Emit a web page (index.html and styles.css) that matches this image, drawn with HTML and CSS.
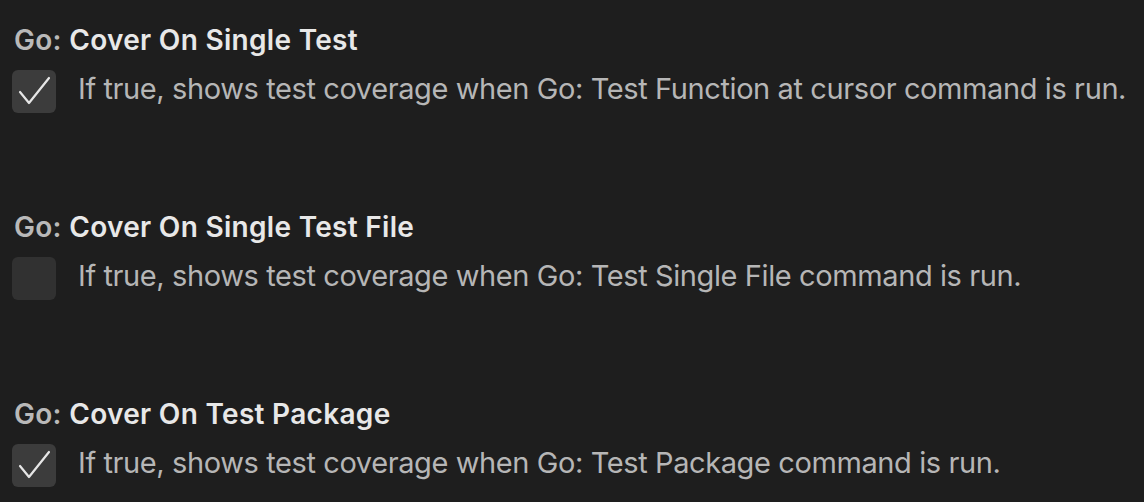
FILE: index.html
```html
<!DOCTYPE html>
<html lang="en">
<head>
<meta charset="utf-8">
<title>Settings</title>
<link rel="stylesheet" href="styles.css">
</head>
<body>
<div class="settings">
  <div class="setting">
    <div class="title"><span class="category">Go: </span><span class="label">Cover On Single Test</span></div>
    <div class="row">
      <div class="checkbox checked">
        <svg viewBox="0 0 44 43" width="44" height="43"><polyline points="8,22 17,33 37,8" fill="none" stroke="#e6e6e6" stroke-width="2.2" stroke-linecap="round" stroke-linejoin="round"/></svg>
      </div>
      <div class="desc">If true, shows test coverage when Go: Test Function at cursor command is run.</div>
    </div>
  </div>
  <div class="setting">
    <div class="title"><span class="category">Go: </span><span class="label">Cover On Single Test File</span></div>
    <div class="row">
      <div class="checkbox"></div>
      <div class="desc">If true, shows test coverage when Go: Test Single File command is run.</div>
    </div>
  </div>
  <div class="setting">
    <div class="title"><span class="category">Go: </span><span class="label">Cover On Test Package</span></div>
    <div class="row">
      <div class="checkbox checked">
        <svg viewBox="0 0 44 43" width="44" height="43"><polyline points="8,22 17,33 37,8" fill="none" stroke="#e6e6e6" stroke-width="2.2" stroke-linecap="round" stroke-linejoin="round"/></svg>
      </div>
      <div class="desc">If true, shows test coverage when Go: Test Package command is run.</div>
    </div>
  </div>
</div>
</body>
</html>
```
FILE: styles.css
```css
html, body {
  margin: 0;
  padding: 0;
  background: #1e1e1e;
  height: 100%;
}
body {
  font-family: Inter, "Liberation Sans", sans-serif;
  overflow: hidden;
}
.settings {
  display: flex;
  flex-direction: column;
  gap: 96px;
  padding: 22px 0 0 14px;
}
.title {
  font-size: 28px;
  line-height: 36px;
  font-weight: 600;
  letter-spacing: 0.3px;
  white-space: nowrap;
}
.category {
  color: #b9b9b9;
}
.label {
  color: #e8e8e8;
}
.row {
  display: flex;
  align-items: flex-start;
  margin-top: 12px;
}
.checkbox {
  width: 44px;
  height: 43px;
  margin-left: -2px;
  border-radius: 6px;
  background: #313131;
  flex: none;
}
.checkbox.checked {
  background: #3c3c3c;
}
.checkbox svg {
  display: block;
}
.desc {
  margin-left: 22px;
  font-size: 29px;
  line-height: 38px;
  letter-spacing: -0.4px;
  color: #b6b6b6;
  white-space: nowrap;
}
```
